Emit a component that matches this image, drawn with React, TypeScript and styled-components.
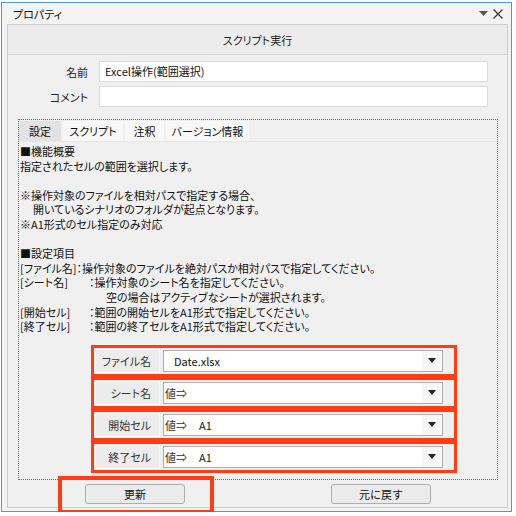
import React from 'react';
import styled, { createGlobalStyle } from 'styled-components';

const GlobalStyle = createGlobalStyle`
  html, body {
    margin: 0;
    padding: 0;
    background: #ffffff;
  }
  body {
    font-family: "Noto Sans CJK JP", "Noto Sans", sans-serif;
    font-size: 11px;
    color: #000;
    font-feature-settings: "palt";
  }
`;

const descLines = [
  '■機能概要',
  '指定されたセルの範囲を選択します。',
  '',
  '※操作対象のファイルを相対パスで指定する場合、',
];

const tabs = [
  { name: '設定', width: 42 },
  { name: 'スクリプト', width: 60 },
  { name: '注釈', width: 39 },
  { name: 'バージョン情報', width: 83 },
];

const formRows = [
  { label: 'ファイル名', value: 'Date.xlsx', prefix: '' },
  { label: 'シート名', value: '', prefix: '値⇒' },
  { label: '開始セル', value: 'A1', prefix: '値⇒' },
  { label: '終了セル', value: 'A1', prefix: '値⇒' },
];

const Arrow = () => (
  <svg width="8" height="5" viewBox="0 0 8 5">
    <path d="M0 0 L8 0 L4 5 Z" fill="#222" />
  </svg>
);

const App = () => {
  return (
    <>
      <GlobalStyle />
      <Window>
        <TitleBar>
          <span>プロパティ</span>
          <TitleIcons>
            <svg width="9" height="5" viewBox="0 0 9 5">
              <path d="M0 0 L9 0 L4.5 5 Z" fill="#555" />
            </svg>
            <svg width="10" height="10" viewBox="0 0 10 10">
              <path d="M0.5 0.5 L9.5 9.5 M9.5 0.5 L0.5 9.5" stroke="#333" strokeWidth="1.2" />
            </svg>
          </TitleIcons>
        </TitleBar>
        <Panel>
          <Header>スクリプト実行</Header>
          <Fields>
            <FieldLabel>名前</FieldLabel>
            <TextBox>Excel操作(範囲選択)</TextBox>
            <FieldLabel>コメント</FieldLabel>
            <TextBox />
          </Fields>
          <Group>
            <TabStrip>
              {tabs.map((t, i) => (
                <Tab key={t.name} $w={t.width} $active={i === 0}>
                  {t.name}
                </Tab>
              ))}
            </TabStrip>
            <Description>
              {descLines.map((line, i) => (
                <Line key={i}>{line || '\u00a0'}</Line>
              ))}
              <Line $indent={13}>開いているシナリオのフォルダが起点となります。</Line>
              <Line>※A1形式のセル指定のみ対応</Line>
              <Line>{'\u00a0'}</Line>
              <Line>■設定項目</Line>
              <Line>
                <Key>[ファイル名]</Key>：操作対象のファイルを絶対パスか相対パスで指定してください。
              </Line>
              <Line>
                <Key $width={69}>[シート名]</Key>：操作対象のシート名を指定してください。
              </Line>
              <Line $indent={86}>空の場合はアクティブなシートが選択されます。</Line>
              <Line>
                <Key $width={69}>[開始セル]</Key>：範囲の開始セルをA1形式で指定してください。
              </Line>
              <Line>
                <Key $width={69}>[終了セル]</Key>：範囲の終了セルをA1形式で指定してください。
              </Line>
            </Description>
            <Form>
              {formRows.map((row) => (
                <FormRow key={row.label}>
                  <RowLabel>{row.label}</RowLabel>
                  <Select>
                    <SelectValue $pad={row.prefix ? 1 : 10}>
                      {row.prefix && <Prefix>{row.prefix}</Prefix>}
                      {row.value}
                    </SelectValue>
                    <SelectArrow>
                      <Arrow />
                    </SelectArrow>
                  </Select>
                </FormRow>
              ))}
            </Form>
          </Group>
          <ButtonRow>
            <Marked>
              <Button>更新</Button>
            </Marked>
            <Button>元に戻す</Button>
          </ButtonRow>
        </Panel>
      </Window>
    </>
  );
};

export default App;

const Window = styled.div`
  box-sizing: border-box;
  width: 511px;
  height: 510px;
  margin: 2px 0 0 1px;
  border: 1px solid #4a96e6;
  background: #f3f3f3;
  display: flex;
  flex-direction: column;
`;

const TitleBar = styled.div`
  height: 21px;
  flex-shrink: 0;
  display: flex;
  align-items: center;
  justify-content: space-between;
  padding: 0 8px 0 11px;
  font-size: 11px;
  color: #111;
`;

const TitleIcons = styled.div`
  display: flex;
  align-items: center;
  gap: 5px;
`;

const Panel = styled.div`
  flex: 1;
  margin: 0 3px 3px 5px;
  border: 1px solid #cbcbcb;
  background: #f0f0f0;
  display: flex;
  flex-direction: column;
`;

const Header = styled.div`
  height: 29px;
  flex-shrink: 0;
  display: flex;
  align-items: center;
  justify-content: center;
  background: #ececec;
  border-bottom: 1px solid #d6d6d6;
  font-size: 11px;
  color: #222;
`;

const Fields = styled.div`
  display: grid;
  grid-template-columns: 80px 1fr;
  column-gap: 11px;
  row-gap: 4px;
  padding: 6px 19px 0 0;
  align-items: center;
`;

const FieldLabel = styled.div`
  text-align: right;
  font-size: 11px;
  color: #222;
`;

const TextBox = styled.div`
  box-sizing: border-box;
  height: 21px;
  line-height: 19px;
  background: #ffffff;
  border: 1px solid #dcdcdc;
  padding: 0 5px;
  font-size: 11px;
  color: #111;
`;

const Group = styled.div`
  box-sizing: border-box;
  height: 361px;
  margin: 12px 9px 0 10px;
  border: 1px dotted #6a6a6a;
  padding-top: 1px;
  display: flex;
  flex-direction: column;
`;

const TabStrip = styled.div`
  display: flex;
  gap: 2px;
  height: 20px;
  border-bottom: 1px solid #e6e6e6;
`;

const Tab = styled.div<{ $active?: boolean; $w: number }>`
  width: ${(p) => p.$w}px;
  display: flex;
  align-items: center;
  justify-content: center;
  font-size: 11px;
  color: #111;
  background: ${(p) => (p.$active ? '#e2e2e2' : '#f8f8f8')};
`;

const Description = styled.div`
  padding: 2px 0 0 1px;
  font-size: 11px;
  line-height: 14.6px;
  color: #111;
`;

const Line = styled.div<{ $indent?: number }>`
  display: flex;
  white-space: nowrap;
  padding-left: ${(p) => p.$indent ?? 0}px;
`;

const Key = styled.span<{ $width?: number }>`
  display: inline-block;
  width: ${(p) => (p.$width ? `${p.$width}px` : 'auto')};
`;

const Form = styled.div`
  margin: 11px 0 0 72px;
  width: 366px;
  display: flex;
  flex-direction: column;
`;

const FormRow = styled.div`
  box-sizing: border-box;
  height: 32px;
  border: 3px solid #ff3c14;
  display: flex;
  align-items: center;
  gap: 3px;
  padding: 0 11px 0 1px;
`;

const RowLabel = styled.div`
  box-sizing: border-box;
  width: 65px;
  height: 24px;
  display: flex;
  align-items: center;
  justify-content: flex-end;
  padding-right: 8px;
  background: #ececec;
  border: 1px solid #f7f7f7;
  font-size: 11px;
  color: #333;
`;

const Select = styled.div`
  box-sizing: border-box;
  flex: 1;
  height: 22px;
  display: flex;
  background: #ffffff;
  border: 1px solid #adadad;
`;

const SelectValue = styled.div<{ $pad: number }>`
  flex: 1;
  display: flex;
  align-items: center;
  padding-left: ${(p) => p.$pad}px;
  font-size: 11px;
  color: #111;
`;

const Prefix = styled.span`
  margin-right: 12px;
  color: #333;
`;

const SelectArrow = styled.div`
  width: 20px;
  display: flex;
  align-items: center;
  justify-content: center;
  background: #f7f7f7;
`;

const ButtonRow = styled.div`
  display: flex;
  gap: 146px;
  padding: 4px 0 0 77px;
`;

const Marked = styled.div`
  position: relative;

  &::after {
    content: '';
    position: absolute;
    inset: -8px -29px -10px -27px;
    border: 4px solid #ff3c14;
    pointer-events: none;
  }
`;

const Button = styled.button`
  box-sizing: border-box;
  width: 100px;
  height: 20px;
  padding: 0;
  border: 1px solid #adadad;
  border-radius: 3px;
  background: #ebebeb;
  font-family: inherit;
  font-size: 11px;
  color: #111;
  display: flex;
  align-items: center;
  justify-content: center;
`;
